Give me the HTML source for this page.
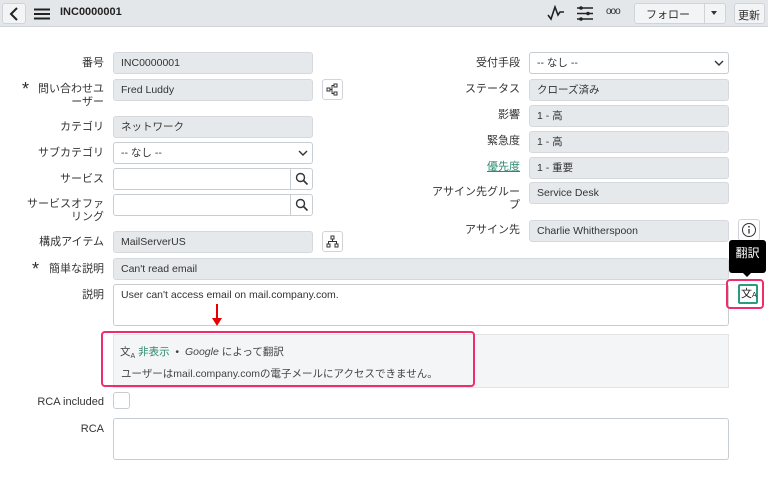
<!DOCTYPE html>
<html><head><meta charset="utf-8"><style>
*{box-sizing:border-box;margin:0;padding:0}
body{width:768px;height:490px;background:#fff;font-family:"Liberation Sans","Noto Sans CJK JP",sans-serif;font-size:11px;color:#2e2e2e;position:relative;overflow:hidden}
.a{position:absolute}
.hdr{left:0;top:0;width:768px;height:27px;background:#e4e7ea;border-bottom:1px solid #d0d4d8}
.lbl{text-align:right;color:#333;font-size:11px;line-height:13px}
.f{background:#e6e9ec;border:1px solid #d5d9dd;border-radius:3px;height:22px;padding:0 7px;line-height:20px;font-size:10.5px;color:#333}
.w{background:#fff;border:1px solid #c8cdd2}
.btn{background:#fff;border:1px solid #d0d4d8;border-radius:3px}
</style></head><body>
<div class="a hdr"></div>
<div class="a btn" style="left:2px;top:3px;width:24px;height:21px;background:#f3f4f5"></div>
<svg class="a" style="left:8px;top:7px" width="12" height="14"><path d="M9 1L3 7l6 6" stroke="#222" stroke-width="2" fill="none"/></svg>
<svg class="a" style="left:34px;top:8px" width="16" height="12"><path d="M0 1.5h16M0 6h16M0 10.5h16" stroke="#222" stroke-width="2"/></svg>
<div class="a" style="left:60px;top:6px;font-size:11px;font-weight:bold;color:#222">INC0000001</div>
<svg class="a" style="left:547px;top:5px" width="18" height="17"><path d="M1 10l3 4 4-12 3 8 2-3h4" stroke="#222" stroke-width="1.6" fill="none"/></svg>
<svg class="a" style="left:576px;top:5px" width="18" height="17"><path d="M1 3h16M1 8.5h16M1 14h16" stroke="#222" stroke-width="1.5"/><circle cx="5" cy="3" r="1.8" fill="#222"/><circle cx="12" cy="8.5" r="1.8" fill="#222"/><circle cx="5" cy="14" r="1.8" fill="#222"/></svg>
<div class="a" style="left:606px;top:6px;font-size:10px;letter-spacing:-1px">ооо</div>
<div class="a btn" style="left:634px;top:3px;width:92px;height:21px;background:#f3f4f5"></div>
<div class="a" style="left:704px;top:3px;width:1px;height:21px;background:#d0d4d8"></div>
<div class="a" style="left:646px;top:6px;font-size:11px">フォロー</div>
<div class="a" style="left:711px;top:11px;border:3.5px solid transparent;border-top:4px solid #333"></div>
<div class="a btn" style="left:734px;top:3px;width:31px;height:21px;background:#f3f4f5;font-size:11px;padding:3px 0 0 3px">更新</div>

<div class="a lbl" style="left:0;top:57px;width:104px">番号</div>
<div class="a f" style="left:113px;top:52px;width:200px">INC0000001</div>
<div class="a" style="left:22px;top:82px;font-size:18px;line-height:14px">*</div>
<div class="a lbl" style="left:30px;top:83px;width:74px">問い合わせユ<br>ーザー</div>
<div class="a f" style="left:113px;top:79px;width:200px">Fred Luddy</div>
<div class="a btn" style="left:322px;top:79px;width:21px;height:21px"></div>
<svg class="a" style="left:326px;top:83px" width="13" height="13"><rect x="1" y="5" width="3" height="3" fill="none" stroke="#333"/><rect x="8" y="1" width="3" height="3" fill="none" stroke="#333"/><rect x="8" y="9" width="3" height="3" fill="none" stroke="#333"/><path d="M4 6.5h2V2.5h2M6 6.5v4h2" stroke="#333" fill="none"/></svg>
<div class="a lbl" style="left:0;top:121px;width:104px">カテゴリ</div>
<div class="a f" style="left:113px;top:116px;width:200px">ネットワーク</div>
<div class="a lbl" style="left:0;top:147px;width:104px">サブカテゴリ</div>
<div class="a f w" style="left:113px;top:142px;width:200px">-- なし --</div>
<svg class="a" style="left:298px;top:150px" width="10" height="6"><path d="M1 1l4 4 4-4" stroke="#333" stroke-width="1.4" fill="none"/></svg>
<div class="a lbl" style="left:0;top:173px;width:104px">サービス</div>
<div class="a f w" style="left:113px;top:168px;width:200px"></div>
<div class="a" style="left:290px;top:168px;width:1px;height:22px;background:#c8cdd2"></div>
<svg class="a" style="left:295px;top:172px" width="14" height="14"><circle cx="5.5" cy="5.5" r="4" stroke="#333" stroke-width="1.4" fill="none"/><path d="M8.5 8.5l4 4" stroke="#333" stroke-width="1.6"/></svg>
<div class="a lbl" style="left:0;top:198px;width:104px">サービスオファ<br>リング</div>
<div class="a f w" style="left:113px;top:194px;width:200px"></div>
<div class="a" style="left:290px;top:194px;width:1px;height:22px;background:#c8cdd2"></div>
<svg class="a" style="left:295px;top:198px" width="14" height="14"><circle cx="5.5" cy="5.5" r="4" stroke="#333" stroke-width="1.4" fill="none"/><path d="M8.5 8.5l4 4" stroke="#333" stroke-width="1.6"/></svg>
<div class="a lbl" style="left:0;top:236px;width:104px">構成アイテム</div>
<div class="a f" style="left:113px;top:231px;width:200px">MailServerUS</div>
<div class="a btn" style="left:322px;top:231px;width:21px;height:21px"></div>
<svg class="a" style="left:326px;top:235px" width="13" height="13"><rect x="5" y="1" width="3" height="3" fill="none" stroke="#333"/><rect x="1" y="9" width="3" height="3" fill="none" stroke="#333"/><rect x="9" y="9" width="3" height="3" fill="none" stroke="#333"/><path d="M6.5 4v2.5M2.5 9V6.5h8V9" stroke="#333" fill="none"/></svg>
<div class="a" style="left:32px;top:262px;font-size:18px;line-height:14px">*</div>
<div class="a lbl" style="left:40px;top:263px;width:64px">簡単な説明</div>
<div class="a f" style="left:113px;top:258px;width:616px">Can't read email</div>
<div class="a lbl" style="left:0;top:289px;width:104px">説明</div>
<div class="a f w" style="left:113px;top:284px;width:616px;height:42px;line-height:18px;padding-top:1px">User can't access email on mail.company.com.</div>

<div class="a" style="left:113px;top:334px;width:616px;height:54px;background:#f4f5f6;border:1px solid #e2e5e8"></div>
<div class="a" style="left:101px;top:331px;width:374px;height:56px;border:2px solid #ee2d6a;border-radius:4px"></div>
<div class="a" style="left:216px;top:304px;width:2px;height:16px;background:#e60000"></div>
<div class="a" style="left:212px;top:318px;border:5px solid transparent;border-top:8px solid #e60000"></div>
<div class="a" style="left:120px;top:344px;font-size:10.5px;color:#444">文<sub style="font-size:7px">A</sub> <span style="color:#2a8a6e">非表示</span> &nbsp;• &nbsp;<i>Google</i> によって翻訳</div>
<div class="a" style="left:121px;top:366px;font-size:10.5px;color:#444">ユーザーはmail.company.comの電子メールにアクセスできません。</div>

<div class="a lbl" style="left:0;top:396px;width:104px">RCA included</div>
<div class="a btn" style="left:113px;top:392px;width:17px;height:17px;border-color:#c8cdd2"></div>
<div class="a lbl" style="left:0;top:423px;width:104px">RCA</div>
<div class="a f w" style="left:113px;top:418px;width:616px;height:42px"></div>

<div class="a lbl" style="left:400px;top:57px;width:120px">受付手段</div>
<div class="a f w" style="left:529px;top:52px;width:200px">-- なし --</div>
<svg class="a" style="left:714px;top:60px" width="10" height="6"><path d="M1 1l4 4 4-4" stroke="#333" stroke-width="1.4" fill="none"/></svg>
<div class="a lbl" style="left:400px;top:83px;width:120px">ステータス</div>
<div class="a f" style="left:529px;top:79px;width:200px">クローズ済み</div>
<div class="a lbl" style="left:400px;top:109px;width:120px">影響</div>
<div class="a f" style="left:529px;top:105px;width:200px">1 - 高</div>
<div class="a lbl" style="left:400px;top:135px;width:120px">緊急度</div>
<div class="a f" style="left:529px;top:131px;width:200px">1 - 高</div>
<div class="a lbl" style="left:400px;top:161px;width:120px;color:#2a8a6e;text-decoration:underline">優先度</div>
<div class="a f" style="left:529px;top:157px;width:200px">1 - 重要</div>
<div class="a lbl" style="left:400px;top:186px;width:120px">アサイン先グルー<br>プ</div>
<div class="a f" style="left:529px;top:182px;width:200px">Service Desk</div>
<div class="a lbl" style="left:400px;top:224px;width:120px">アサイン先</div>
<div class="a f" style="left:529px;top:220px;width:200px">Charlie Whitherspoon</div>
<div class="a btn" style="left:738px;top:219px;width:22px;height:22px"></div>
<svg class="a" style="left:741px;top:222px" width="16" height="16"><circle cx="8" cy="8" r="6.5" stroke="#333" fill="none"/><path d="M8 7v4.5" stroke="#333" stroke-width="1.3"/><circle cx="8" cy="4.8" r=".9" fill="#333"/></svg>
<div class="a" style="left:729px;top:240px;width:37px;height:33px;background:#000;border-radius:3px;color:#fff;font-size:12px;text-align:center;line-height:26px">翻訳</div>
<div class="a" style="left:742px;top:272px;border:5px solid transparent;border-top:5px solid #000"></div>
<div class="a" style="left:726px;top:279px;width:38px;height:30px;border:2px solid #ee2d6a;border-radius:4px"></div>
<div class="a" style="left:738px;top:284px;width:20px;height:20px;border:2px solid #2a9a80;border-radius:2px;background:#fff"></div>
<div class="a" style="left:741px;top:285px;font-size:11px;color:#222">文<span style="font-size:7px">A</span></div>
</body></html>
